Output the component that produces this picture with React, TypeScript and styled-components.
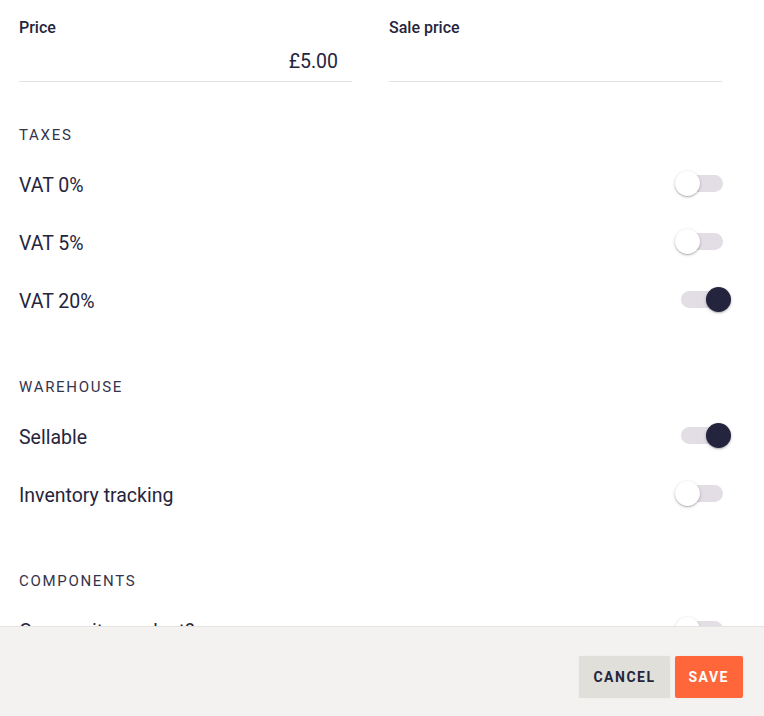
import styled, { createGlobalStyle } from 'styled-components';

const GlobalStyle = createGlobalStyle`
  html, body {
    margin: 0;
    padding: 0;
    background: #ffffff;
  }
  body {
    font-family: Roboto, "Liberation Sans", Arial, sans-serif;
    color: #25253d;
  }
  * {
    box-sizing: border-box;
  }
`;

// STYLES
const Page = styled.div`
  height: 716px;
  width: 764px;
  display: flex;
  flex-direction: column;
  overflow: hidden;
`;

const ScrollArea = styled.div`
  flex: 1;
  overflow: hidden;
  padding: 18px 42px 0 19px;
`;

const PriceGrid = styled.div`
  display: grid;
  grid-template-columns: 333px 333px;
  column-gap: 37px;
`;

const FieldLabel = styled.label`
  display: block;
  font-size: 16px;
  font-weight: 500;
  line-height: 20px;
  color: #25253d;
`;

const Input = styled.div`
  height: 44px;
  padding: 3px 14px 0 0;
  display: flex;
  align-items: center;
  justify-content: flex-end;
  border-bottom: 1px solid #e2e2e2;
  font-size: 19.5px;
  color: #25253d;
`;

const Section = styled.section`
  margin-top: 43px;
  & + & {
    margin-top: 47px;
  }
`;

const SectionTitle = styled.h3`
  margin: 0 0 11px;
  font-size: 15px;
  font-weight: 400;
  line-height: 20px;
  letter-spacing: 1.7px;
  text-transform: uppercase;
  color: #34344a;
`;

const Row = styled.div`
  height: 58px;
  display: flex;
  align-items: center;
  justify-content: space-between;
  font-size: 19.5px;
  color: #25253d;
`;

const Toggle = styled.div`
  position: relative;
  flex-shrink: 0;
  width: 56px;
  height: 25px;
  margin-right: -9px;
  margin-top: -4px;
`;

const Track = styled.span`
  position: absolute;
  left: 6px;
  top: 4px;
  width: 42px;
  height: 17px;
  border-radius: 9px;
  background: #e3dde5;
`;

const Thumb = styled.span<{ $on: boolean }>`
  position: absolute;
  top: 0;
  left: ${(p) => (p.$on ? '31px' : '0')};
  width: 25px;
  height: 25px;
  border-radius: 50%;
  background: ${(p) => (p.$on ? '#24243f' : '#ffffff')};
  box-shadow: 0 1px 3px rgba(0, 0, 0, 0.25), 0 1px 1px rgba(0, 0, 0, 0.12);
`;

const Footer = styled.footer`
  height: 90px;
  flex-shrink: 0;
  background: #f3f2f1;
  border-top: 1px solid #e6e4e2;
  display: flex;
  justify-content: flex-end;
  align-items: flex-start;
  gap: 5px;
  padding: 29px 21px 0 0;
`;

const Button = styled.button<{ $primary?: boolean }>`
  height: 42px;
  padding: 0 14px;
  border: none;
  border-radius: 2px;
  font-family: Roboto, "Liberation Sans", Arial, sans-serif;
  font-size: 14px;
  font-weight: 700;
  letter-spacing: 1.5px;
  text-transform: uppercase;
  cursor: pointer;
  background: ${(p) => (p.$primary ? '#ff663a' : '#e0dfd9')};
  color: ${(p) => (p.$primary ? '#ffffff' : '#25253d')};
  box-shadow: 0 0 1px rgba(0, 0, 0, 0.12);
`;

const sections = [
  {
    title: 'Taxes',
    rows: [
      { label: 'VAT 0%', on: false },
      { label: 'VAT 5%', on: false },
      { label: 'VAT 20%', on: true },
    ],
  },
  {
    title: 'Warehouse',
    rows: [
      { label: 'Sellable', on: true },
      { label: 'Inventory tracking', on: false },
    ],
  },
  {
    title: 'Components',
    rows: [{ label: 'Composite product?', on: false }],
  },
];

function Switch({ on }: { on: boolean }) {
  return (
    <Toggle role="switch" aria-checked={on}>
      <Track />
      <Thumb $on={on} />
    </Toggle>
  );
}

export default function App() {
  return (
    <>
      <GlobalStyle />
      <Page>
        <ScrollArea>
          <PriceGrid>
            <div>
              <FieldLabel>Price</FieldLabel>
              <Input>£5.00</Input>
            </div>
            <div>
              <FieldLabel>Sale price</FieldLabel>
              <Input />
            </div>
          </PriceGrid>
          {sections.map((section) => (
            <Section key={section.title}>
              <SectionTitle>{section.title}</SectionTitle>
              {section.rows.map((row) => (
                <Row key={row.label}>
                  {row.label}
                  <Switch on={row.on} />
                </Row>
              ))}
            </Section>
          ))}
        </ScrollArea>
        <Footer>
          <Button>Cancel</Button>
          <Button $primary>Save</Button>
        </Footer>
      </Page>
    </>
  );
}
